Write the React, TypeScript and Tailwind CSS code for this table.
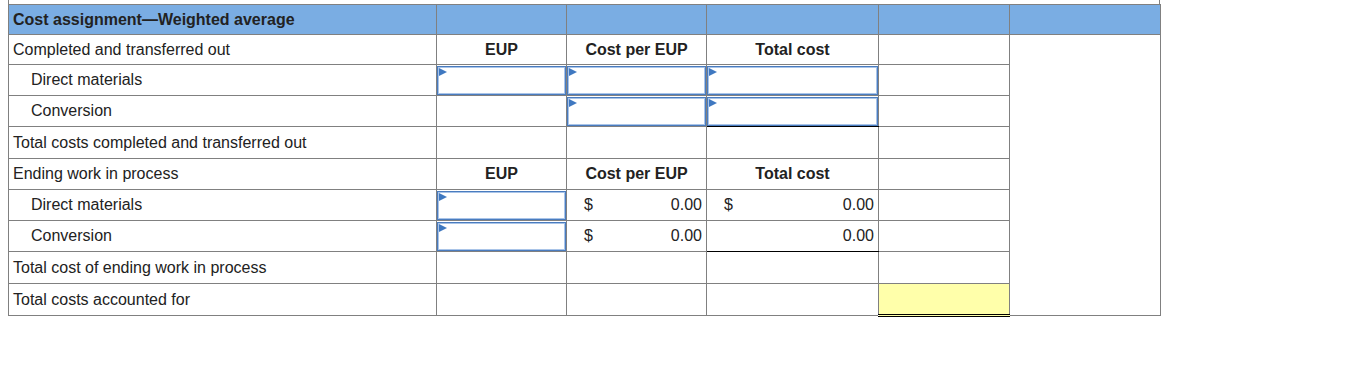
import React from "react";

const cell = "border border-[#808080] p-0 align-middle";

function InputBox() {
  return (
    <div className="relative h-[29px] border border-[#4a7cbf] bg-white shadow-[inset_0_0_0_1px_#a9c4e8]">
      <span className="absolute left-[1px] top-[1px] h-0 w-0 border-y-[4px] border-l-[8px] border-y-transparent border-l-[#3f78c0]" />
    </div>
  );
}

function Label({ text, indent = false, bold = false }: { text: string; indent?: boolean; bold?: boolean }) {
  return (
    <div className={`${indent ? "pl-[22px]" : "pl-[4px]"} ${bold ? "font-bold" : ""} whitespace-nowrap`}>
      {text}
    </div>
  );
}

function Money({ amount, sign = true }: { amount: string; sign?: boolean }) {
  return (
    <div className="flex items-center justify-between pl-[17px] pr-[4px]">
      <span>{sign ? "$" : ""}</span>
      <span>{amount}</span>
    </div>
  );
}

function ColHeads() {
  return (
    <>
      <td className={`${cell} text-center font-bold`}>EUP</td>
      <td className={`${cell} text-center font-bold`}>Cost per EUP</td>
      <td className={`${cell} text-center font-bold`}>Total cost</td>
    </>
  );
}

export default function App() {
  return (
    <div className="min-h-[392px] bg-white pl-[8px] font-['Liberation_Sans',Arial,sans-serif] text-[16px] leading-[18px] text-[#222]">
      {/* table sits inside an outer frame whose side lines poke out on top */}
      <div className="h-[4px] w-[1152px] border-x border-[#808080]" />
      <table className="w-[1152px] table-fixed border-collapse">
        <colgroup>
          <col className="w-[428px]" />
          <col className="w-[130px]" />
          <col className="w-[140px]" />
          <col className="w-[172px]" />
          <col className="w-[131px]" />
          <col className="w-[151px]" />
        </colgroup>
        <tbody>
          <tr className="h-[30px] bg-[#7aade3]">
            <td className={cell}>
              <Label text="Cost assignment—Weighted average" bold />
            </td>
            <td className={cell} />
            <td className={cell} />
            <td className={cell} />
            <td className={cell} />
            <td className={cell} />
          </tr>
          <tr className="h-[30px]">
            <td className={cell}>
              <Label text="Completed and transferred out" />
            </td>
            <ColHeads />
            <td className={cell} />
            <td className={cell} rowSpan={9} />
          </tr>
          <tr className="h-[31px]">
            <td className={cell}>
              <Label text="Direct materials" indent />
            </td>
            <td className={cell}>
              <InputBox />
            </td>
            <td className={cell}>
              <InputBox />
            </td>
            <td className={cell}>
              <InputBox />
            </td>
            <td className={cell} />
          </tr>
          <tr className="h-[31px]">
            <td className={cell}>
              <Label text="Conversion" indent />
            </td>
            <td className={cell} />
            <td className={cell}>
              <InputBox />
            </td>
            <td className={`${cell} border-b-black`}>
              <InputBox />
            </td>
            <td className={cell} />
          </tr>
          <tr className="h-[32px]">
            <td className={cell}>
              <Label text="Total costs completed and transferred out" />
            </td>
            <td className={cell} />
            <td className={cell} />
            <td className={cell} />
            <td className={cell} />
          </tr>
          <tr className="h-[31px]">
            <td className={cell}>
              <Label text="Ending work in process" />
            </td>
            <ColHeads />
            <td className={cell} />
          </tr>
          <tr className="h-[31px]">
            <td className={cell}>
              <Label text="Direct materials" indent />
            </td>
            <td className={cell}>
              <InputBox />
            </td>
            <td className={cell}>
              <Money amount="0.00" />
            </td>
            <td className={cell}>
              <Money amount="0.00" />
            </td>
            <td className={cell} />
          </tr>
          <tr className="h-[31px]">
            <td className={cell}>
              <Label text="Conversion" indent />
            </td>
            <td className={cell}>
              <InputBox />
            </td>
            <td className={cell}>
              <Money amount="0.00" />
            </td>
            <td className={`${cell} border-b-black`}>
              <Money amount="0.00" sign={false} />
            </td>
            <td className={cell} />
          </tr>
          <tr className="h-[32px]">
            <td className={cell}>
              <Label text="Total cost of ending work in process" />
            </td>
            <td className={cell} />
            <td className={cell} />
            <td className={cell} />
            <td className={`${cell} border-b-black`} />
          </tr>
          <tr className="h-[32px]">
            <td className={cell}>
              <Label text="Total costs accounted for" />
            </td>
            <td className={cell} />
            <td className={cell} />
            <td className={cell} />
            <td className={`${cell} border-b-[3px] border-double border-b-black bg-[#ffffaa]`} />
          </tr>
        </tbody>
      </table>
    </div>
  );
}
